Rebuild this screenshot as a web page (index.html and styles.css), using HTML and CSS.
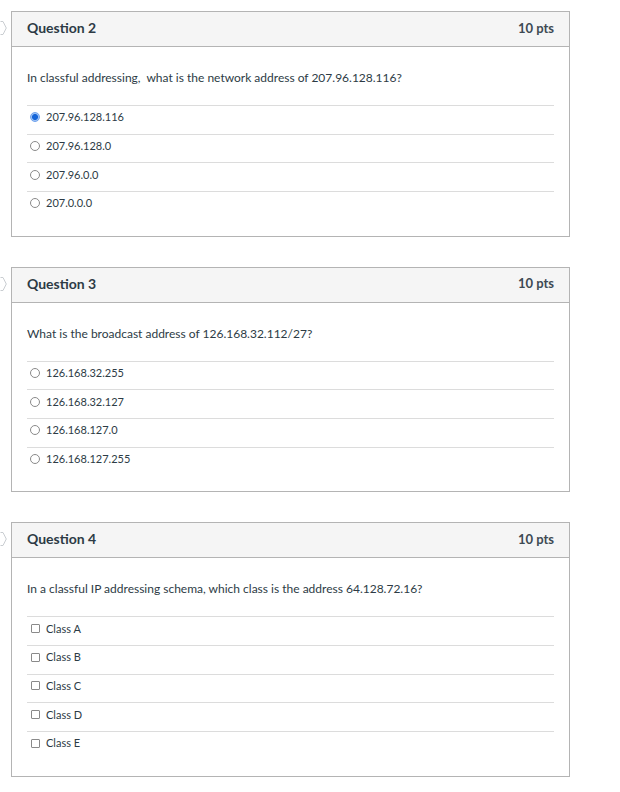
FILE: index.html
```html
<!DOCTYPE html>
<html lang="en">
<head>
    <meta charset="UTF-8">
    <title>Quiz</title>
    <link rel="stylesheet" href="styles.css">
</head>
<body>
    <!-- Question 2 -->
    <div class="question">
        <svg class="flag" width="7" height="14" viewBox="0 0 7 14"><path d="M0.5 0.5 L3 0.5 L6.3 7 L3 13.5 L0.5 13.5" fill="none" stroke="#c9cdd1" stroke-width="1"/></svg>
        <div class="header">
            <span class="title">Question 2</span>
            <span class="pts">10 pts</span>
        </div>
        <div class="body">
            <p class="text">In classful addressing,&nbsp; what is the network address of 207.96.128.116?</p>
            <div class="answers">
                <div class="answer"><span class="radio checked"></span>207.96.128.116</div>
                <div class="answer"><span class="radio"></span>207.96.128.0</div>
                <div class="answer"><span class="radio"></span>207.96.0.0</div>
                <div class="answer"><span class="radio"></span>207.0.0.0</div>
            </div>
        </div>
    </div>

    <!-- Question 3 -->
    <div class="question">
        <svg class="flag" width="7" height="14" viewBox="0 0 7 14"><path d="M0.5 0.5 L3 0.5 L6.3 7 L3 13.5 L0.5 13.5" fill="none" stroke="#c9cdd1" stroke-width="1"/></svg>
        <div class="header">
            <span class="title">Question 3</span>
            <span class="pts">10 pts</span>
        </div>
        <div class="body">
            <p class="text">What is the broadcast address of 126.168.32.112/27?</p>
            <div class="answers">
                <div class="answer"><span class="radio"></span>126.168.32.255</div>
                <div class="answer"><span class="radio"></span>126.168.32.127</div>
                <div class="answer"><span class="radio"></span>126.168.127.0</div>
                <div class="answer"><span class="radio"></span>126.168.127.255</div>
            </div>
        </div>
    </div>

    <!-- Question 4 -->
    <div class="question">
        <svg class="flag" width="7" height="14" viewBox="0 0 7 14"><path d="M0.5 0.5 L3 0.5 L6.3 7 L3 13.5 L0.5 13.5" fill="none" stroke="#c9cdd1" stroke-width="1"/></svg>
        <div class="header">
            <span class="title">Question 4</span>
            <span class="pts">10 pts</span>
        </div>
        <div class="body">
            <p class="text">In a classful IP addressing schema, which class is the address 64.128.72.16?</p>
            <div class="answers">
                <div class="answer"><span class="check"></span>Class A</div>
                <div class="answer"><span class="check"></span>Class B</div>
                <div class="answer"><span class="check"></span>Class C</div>
                <div class="answer"><span class="check"></span>Class D</div>
                <div class="answer"><span class="check"></span>Class E</div>
            </div>
        </div>
    </div>
</body>
</html>
```

FILE: styles.css
```css
* {
    margin: 0;
    padding: 0;
    box-sizing: border-box;
}

body {
    font-family: 'Lato', 'Liberation Sans', sans-serif;
    color: #2d3b45;
    background: #fff;
    padding: 11px 50px 0 11px;
}

/* Question card */
.question {
    position: relative;
    border: 1px solid #b4b4b4;
    margin-bottom: 30px;
}

.flag {
    position: absolute;
    left: -12px;
    top: 9px;
}

.header {
    display: flex;
    justify-content: space-between;
    align-items: center;
    height: 35px;
    padding: 0 15px 3px;
    background-color: #f5f5f5;
    border-bottom: 1px solid #b4b4b4;
}

.title {
    font-size: 14px;
    font-weight: bold;
}

.pts {
    font-size: 13px;
    font-weight: bold;
    color: #3d4a53;
}

.body {
    padding: 23px 15px 16px;
}

.text {
    font-size: 12px;
    line-height: 16px;
    margin-bottom: 19px;
}

/* Answers */
.answer {
    display: flex;
    align-items: center;
    font-size: 11px;
    line-height: 16px;
    height: 28.67px;
    padding-bottom: 5px;
    border-top: 1px solid #dcdcdc;
}

.radio {
    width: 10px;
    height: 10px;
    margin: 0 6px 0 3px;
    border: 1px solid #8a8a8a;
    border-radius: 50%;
    background: #fff;
}

.radio.checked {
    border-color: #6fa3ee;
    background: radial-gradient(circle, #1565d8 0, #1565d8 2.6px, #9ec2f4 3.4px);
}

.check {
    width: 9px;
    height: 9px;
    margin: 0 6px 0 4px;
    border: 1px solid #8a8a8a;
    border-radius: 1px;
}
```
